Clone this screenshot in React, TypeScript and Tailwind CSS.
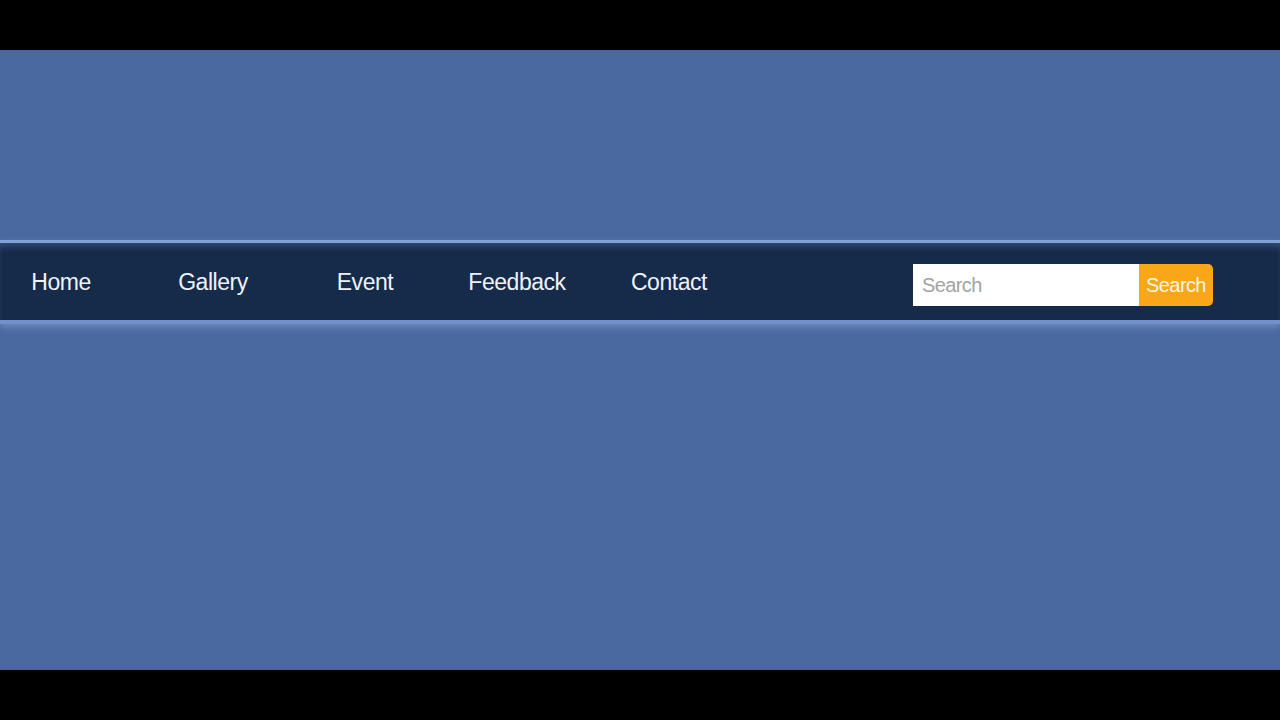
import React from 'react';

const NavBar = () => {
  const links = ['Home', 'Gallery', 'Event', 'Feedback', 'Contact'];

  return (
    <nav className="border-t-[3px] border-b-[4px] border-t-[#83a1d4] border-b-[#7192cc] bg-[#162a49] shadow-[inset_0_6px_6px_-2px_rgba(70,100,150,0.55),0_3px_7px_rgba(140,172,226,0.55)]">
      <div className="flex h-[77px] items-center justify-between pr-[67px]">
        {/* Links */}
        <ul className="-ml-[15px] mt-[2px] flex">
          {links.map((link) => (
            <li key={link} className="flex w-[152px] justify-center">
              <a
                href="#"
                className="text-[23px] tracking-[-0.02em] text-[#eef2fa] [font-family:'Liberation_Sans',Arial,sans-serif]"
              >
                {link}
              </a>
            </li>
          ))}
        </ul>

        {/* Search */}
        <form className="mt-[7px] flex h-[42px]" onSubmit={(e) => e.preventDefault()}>
          <input
            type="text"
            placeholder="Search"
            className="h-full w-[226px] bg-white pl-[9px] text-[20px] tracking-[-0.03em] text-gray-700 outline-none placeholder:text-[#a3a3a3] [font-family:'Liberation_Sans',Arial,sans-serif]"
          />
          <button
            type="submit"
            className="h-full w-[74px] rounded-r-[5px] bg-[#f9a619] text-[20px] tracking-[-0.03em] text-[#fdf6e8] [font-family:'Liberation_Sans',Arial,sans-serif]"
          >
            Search
          </button>
        </form>
      </div>
    </nav>
  );
};

export default function App() {
  return (
    <div className="flex h-[720px] w-[1280px] flex-col bg-black">
      <div className="h-[50px]" />
      <main className="flex h-[620px] flex-col bg-[#4a69a0] pt-[190px]">
        <NavBar />
      </main>
      <div className="h-[50px]" />
    </div>
  );
}
